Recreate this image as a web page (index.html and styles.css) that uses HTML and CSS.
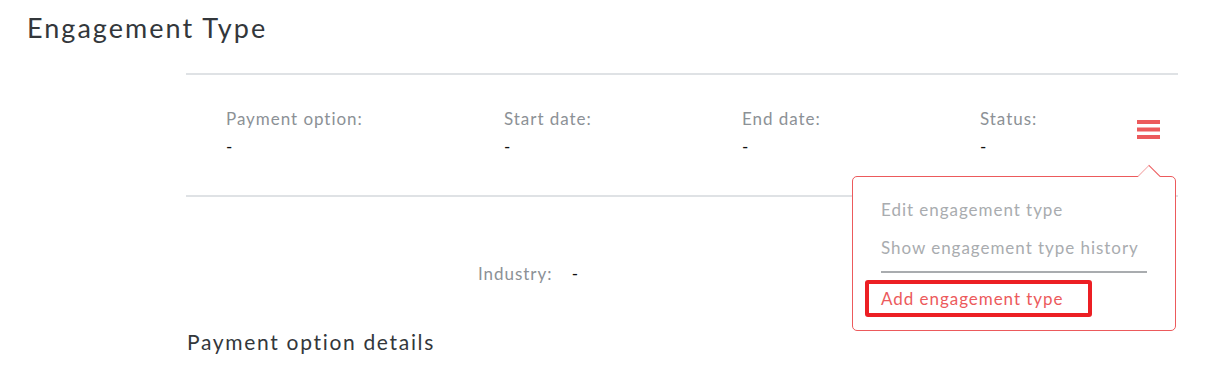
FILE: index.html
```html
<!DOCTYPE html>
<html lang="en">
<head>
    <meta charset="UTF-8">
    <meta name="viewport" content="width=device-width, initial-scale=1.0">
    <title>Engagement Type</title>
    <link rel="stylesheet" href="styles.css">
</head>
<body>
    <h1 class="page-title">Engagement Type</h1>

    <div class="section">
        <div class="summary">
            <div class="field">
                <div class="field-label">Payment option:</div>
                <div class="field-value">-</div>
            </div>
            <div class="field">
                <div class="field-label">Start date:</div>
                <div class="field-value">-</div>
            </div>
            <div class="field">
                <div class="field-label">End date:</div>
                <div class="field-value">-</div>
            </div>
            <div class="field">
                <div class="field-label">Status:</div>
                <div class="field-value">-</div>
            </div>

            <button class="menu-btn" aria-label="Menu">
                <svg width="23" height="19" viewBox="0 0 23 19">
                    <rect x="0" y="0" width="23" height="4" fill="#ec5a5c"/>
                    <rect x="0" y="7.5" width="23" height="4" fill="#ec5a5c"/>
                    <rect x="0" y="15" width="23" height="4" fill="#ec5a5c"/>
                </svg>
            </button>

            <div class="dropdown">
                <div class="dropdown-item">Edit engagement type</div>
                <div class="dropdown-item">Show engagement type history</div>
                <div class="dropdown-divider"></div>
                <div class="dropdown-item add">Add engagement type</div>
            </div>
        </div>

        <div class="industry">
            <span class="field-label">Industry:</span>
            <span class="industry-value">-</span>
        </div>

        <h2 class="sub-title">Payment option details</h2>
    </div>
</body>
</html>
```

FILE: styles.css
```css
body {
    margin: 0;
    font-family: Lato, 'Open Sans', Arial, sans-serif;
    letter-spacing: 0.06em;
    background: white;
    color: #333;
}
.page-title {
    margin: 0;
    padding: 12px 0 0 27px;
    font-size: 27px;
    font-weight: 400;
    letter-spacing: 0.075em;
    color: #33373b;
    line-height: 32px;
}
.section {
    margin: 29px 0 0 186px;
    width: 992px;
}
.summary {
    position: relative;
    display: grid;
    grid-template-columns: 278px 238px 238px 1fr;
    padding: 33px 40px 31px 40px;
    border-top: 2px solid #dfe2e5;
    border-bottom: 2px solid #dfe2e5;
}
.field-label {
    font-size: 17px;
    color: #8c9196;
    line-height: 22px;
}
.field-value {
    font-size: 17px;
    color: #111;
    line-height: 34px;
}
.menu-btn {
    position: absolute;
    top: 45px;
    right: 18px;
    padding: 0;
    border: none;
    background: none;
    cursor: pointer;
}
.menu-btn svg {
    display: block;
}
.dropdown {
    position: absolute;
    top: 101px;
    left: 666px;
    width: 294px;
    padding: 14px 0 13px 28px;
    background: white;
    border: 1.5px solid #ec5a5c;
    border-radius: 5px;
    z-index: 2;
}
.dropdown::before {
    content: "";
    position: absolute;
    top: -9px;
    right: 18px;
    width: 15px;
    height: 15px;
    background: white;
    border-top: 1.5px solid #ec5a5c;
    border-left: 1.5px solid #f4b0b1;
    transform: rotate(45deg);
}
.dropdown-item {
    font-size: 17px;
    line-height: 38px;
    color: #a9acaf;
    width: 266px;
}
.dropdown-divider {
    width: 266px;
    height: 2px;
    background: #a9acaf;
    margin: 4px 0 7px 0;
}
.dropdown-item.add {
    color: #ec5a5c;
    width: fit-content;
    line-height: 29px;
    margin-left: -16px;
    padding: 0 24px 0 12px;
    border: 4px solid #ec1f24;
    border-radius: 3px;
}
.industry {
    margin: 66px 0 0 292px;
    font-size: 17px;
    line-height: 22px;
}
.industry-value {
    margin-left: 14px;
    color: #111;
}
.sub-title {
    margin: 44px 0 0 1px;
    font-size: 21px;
    font-weight: 400;
    letter-spacing: 0.08em;
    color: #33373b;
}
```
